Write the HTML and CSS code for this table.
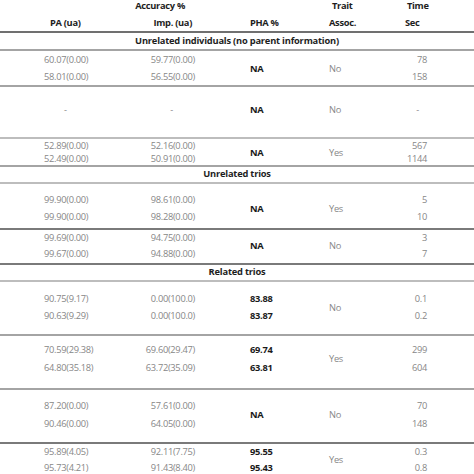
FILE: index.html
```html
<!DOCTYPE html>
<html>
<head>
<meta charset="utf-8">
<link rel="stylesheet" href="styles.css">
</head>
<body>
<div class="tbl">
  <div class="hd">
    <div class="hrow r1">
      <div class="c pa"></div>
      <div class="c imp h-acc">Accuracy %</div>
      <div class="c pha"></div>
      <div class="c tr h-trait">Trait</div>
      <div class="c tm h-time">Time</div>
    </div>
    <div class="hrow r2">
      <div class="c pa h-pa">PA (ua)</div>
      <div class="c imp h-imp">Imp. (ua)</div>
      <div class="c pha">PHA %</div>
      <div class="c tr">Assoc.</div>
      <div class="c tm h-sec">Sec</div>
    </div>
  </div>

  <div class="sec s1 line-mid">Unrelated individuals (no parent information)</div>

  <div class="grp g1 line-mid">
    <div class="c pa">60.07(0.00)</div><div class="c imp">59.77(0.00)</div><div class="c pha sp b">NA</div><div class="c tr sp">No</div><div class="c tm">78</div>
    <div class="c pa">58.01(0.00)</div><div class="c imp">56.55(0.00)</div><div class="c tm">158</div>
  </div>

  <div class="grp g2 line-light">
    <div class="c pa dash-pa">-</div><div class="c imp dash-imp">-</div><div class="c pha b">NA</div><div class="c tr">No</div><div class="c tm dash-tm">-</div>
  </div>

  <div class="grp g3 line-mid">
    <div class="c pa">52.89(0.00)</div><div class="c imp">52.16(0.00)</div><div class="c pha sp b">NA</div><div class="c tr sp">Yes</div><div class="c tm">567</div>
    <div class="c pa">52.49(0.00)</div><div class="c imp">50.91(0.00)</div><div class="c tm">1144</div>
  </div>

  <div class="sec s2 line-light">Unrelated trios</div>

  <div class="grp g4 line-dark">
    <div class="c pa">99.90(0.00)</div><div class="c imp">98.61(0.00)</div><div class="c pha sp b">NA</div><div class="c tr sp">Yes</div><div class="c tm">5</div>
    <div class="c pa">99.90(0.00)</div><div class="c imp">98.28(0.00)</div><div class="c tm">10</div>
  </div>

  <div class="grp g5 line-dark">
    <div class="c pa">99.69(0.00)</div><div class="c imp">94.75(0.00)</div><div class="c pha sp b">NA</div><div class="c tr sp">No</div><div class="c tm">3</div>
    <div class="c pa">99.67(0.00)</div><div class="c imp">94.88(0.00)</div><div class="c tm">7</div>
  </div>

  <div class="sec s3 line-light">Related trios</div>

  <div class="grp g6 line-mid">
    <div class="c pa">90.75(9.17)</div><div class="c imp">0.00(100.0)</div><div class="c pha b">83.88</div><div class="c tr sp">No</div><div class="c tm">0.1</div>
    <div class="c pa">90.63(9.29)</div><div class="c imp">0.00(100.0)</div><div class="c pha b">83.87</div><div class="c tm">0.2</div>
  </div>

  <div class="grp g7 line-mid">
    <div class="c pa">70.59(29.38)</div><div class="c imp">69.60(29.47)</div><div class="c pha b">69.74</div><div class="c tr sp">Yes</div><div class="c tm">299</div>
    <div class="c pa">64.80(35.18)</div><div class="c imp">63.72(35.09)</div><div class="c pha b">63.81</div><div class="c tm">604</div>
  </div>

  <div class="grp g8 line-dark">
    <div class="c pa">87.20(0.00)</div><div class="c imp">57.61(0.00)</div><div class="c pha sp b">NA</div><div class="c tr sp">No</div><div class="c tm">70</div>
    <div class="c pa">90.46(0.00)</div><div class="c imp">64.05(0.00)</div><div class="c tm">148</div>
  </div>

  <div class="grp g9">
    <div class="c pa">95.89(4.05)</div><div class="c imp">92.11(7.75)</div><div class="c pha b">95.55</div><div class="c tr sp">Yes</div><div class="c tm">0.3</div>
    <div class="c pa">95.73(4.21)</div><div class="c imp">91.43(8.40)</div><div class="c pha b">95.43</div><div class="c tm">0.8</div>
  </div>
</div>
</body>
</html>
```

FILE: styles.css
```css
html, body {
  margin: 0;
  padding: 0;
  background: #ffffff;
}

body {
  width: 474px;
  height: 474px;
  overflow: hidden;
  font-family: "Open Sans", "Noto Sans", sans-serif;
  font-size: 9.3px;
  letter-spacing: -0.3px;
  color: #878787;
}

.tbl {
  width: 474px;
}

.hrow,
.grp {
  display: grid;
  grid-template-columns: 120px 75px 134px 51px 47px;
}

.c {
  white-space: nowrap;
  line-height: 17px;
}

.pa { grid-column: 1; padding-left: 44px; }
.imp { grid-column: 2; text-align: right; }
.pha { grid-column: 3; padding-left: 55px; }
.tr { grid-column: 4; }
.tm { grid-column: 5; text-align: right; }

.sp {
  grid-row: span 2;
  align-self: center;
}

.b {
  font-weight: 700;
  color: #1a1a1a;
}

/* header */
.hd {
  border-bottom: 2px solid #707070;
  font-weight: 700;
  color: #1e1e1e;
}

.r1 {
  height: 11px;
}

.r1 .c {
  line-height: 11px;
}

.r2 {
  height: 20px;
  padding-top: 3px;
  box-sizing: border-box;
}

.h-acc { padding-right: 10px; }
.h-trait { padding-left: 3px; }
.h-time { text-align: left; padding-left: 27px; }
.h-pa { padding-left: 50px; }
.h-imp { padding-right: 3px; }
.h-sec { text-align: left; padding-left: 25px; }

/* section titles */
.sec {
  text-align: center;
  font-weight: 700;
  color: #1e1e1e;
  letter-spacing: -0.2px;
}

.s1 { height: 16px; line-height: 16px; }
.s2 { height: 15px; line-height: 14px; }
.s3 { height: 15px; line-height: 14px; }

/* row lines */
.line-light { border-bottom: 2px solid #bdbdbd; }
.line-mid { border-bottom: 2px solid #a4a4a4; }
.line-dark { border-bottom: 2px solid #7a7a7a; }

/* groups */
.g1 { grid-auto-rows: 17px; }

.g2 {
  grid-auto-rows: 17px;
  padding: 14px 0 19px;
}

.dash-pa { padding-left: 64px; }
.dash-imp { padding-right: 22px; }
.dash-tm { padding-right: 8px; }

.g3 { grid-auto-rows: 13px; }
.g3 .c { line-height: 13px; }

.g4 {
  grid-auto-rows: 17px;
  padding: 7px 0 3px;
}

.g5 {
  grid-auto-rows: 16px;
  padding: 0 0 1px;
}
.g5 .c { line-height: 16px; }

.g6 {
  grid-auto-rows: 17px;
  padding: 8px 0 10px;
}

.g7 {
  grid-auto-rows: 18px;
  padding: 5px 0 11px;
}
.g7 .c { line-height: 18px; }

.g8 {
  grid-auto-rows: 18px;
  padding: 7px 0 9px;
}
.g8 .c { line-height: 18px; }

.g9 { grid-auto-rows: 16px; }
.g9 .c { line-height: 16px; }
```
